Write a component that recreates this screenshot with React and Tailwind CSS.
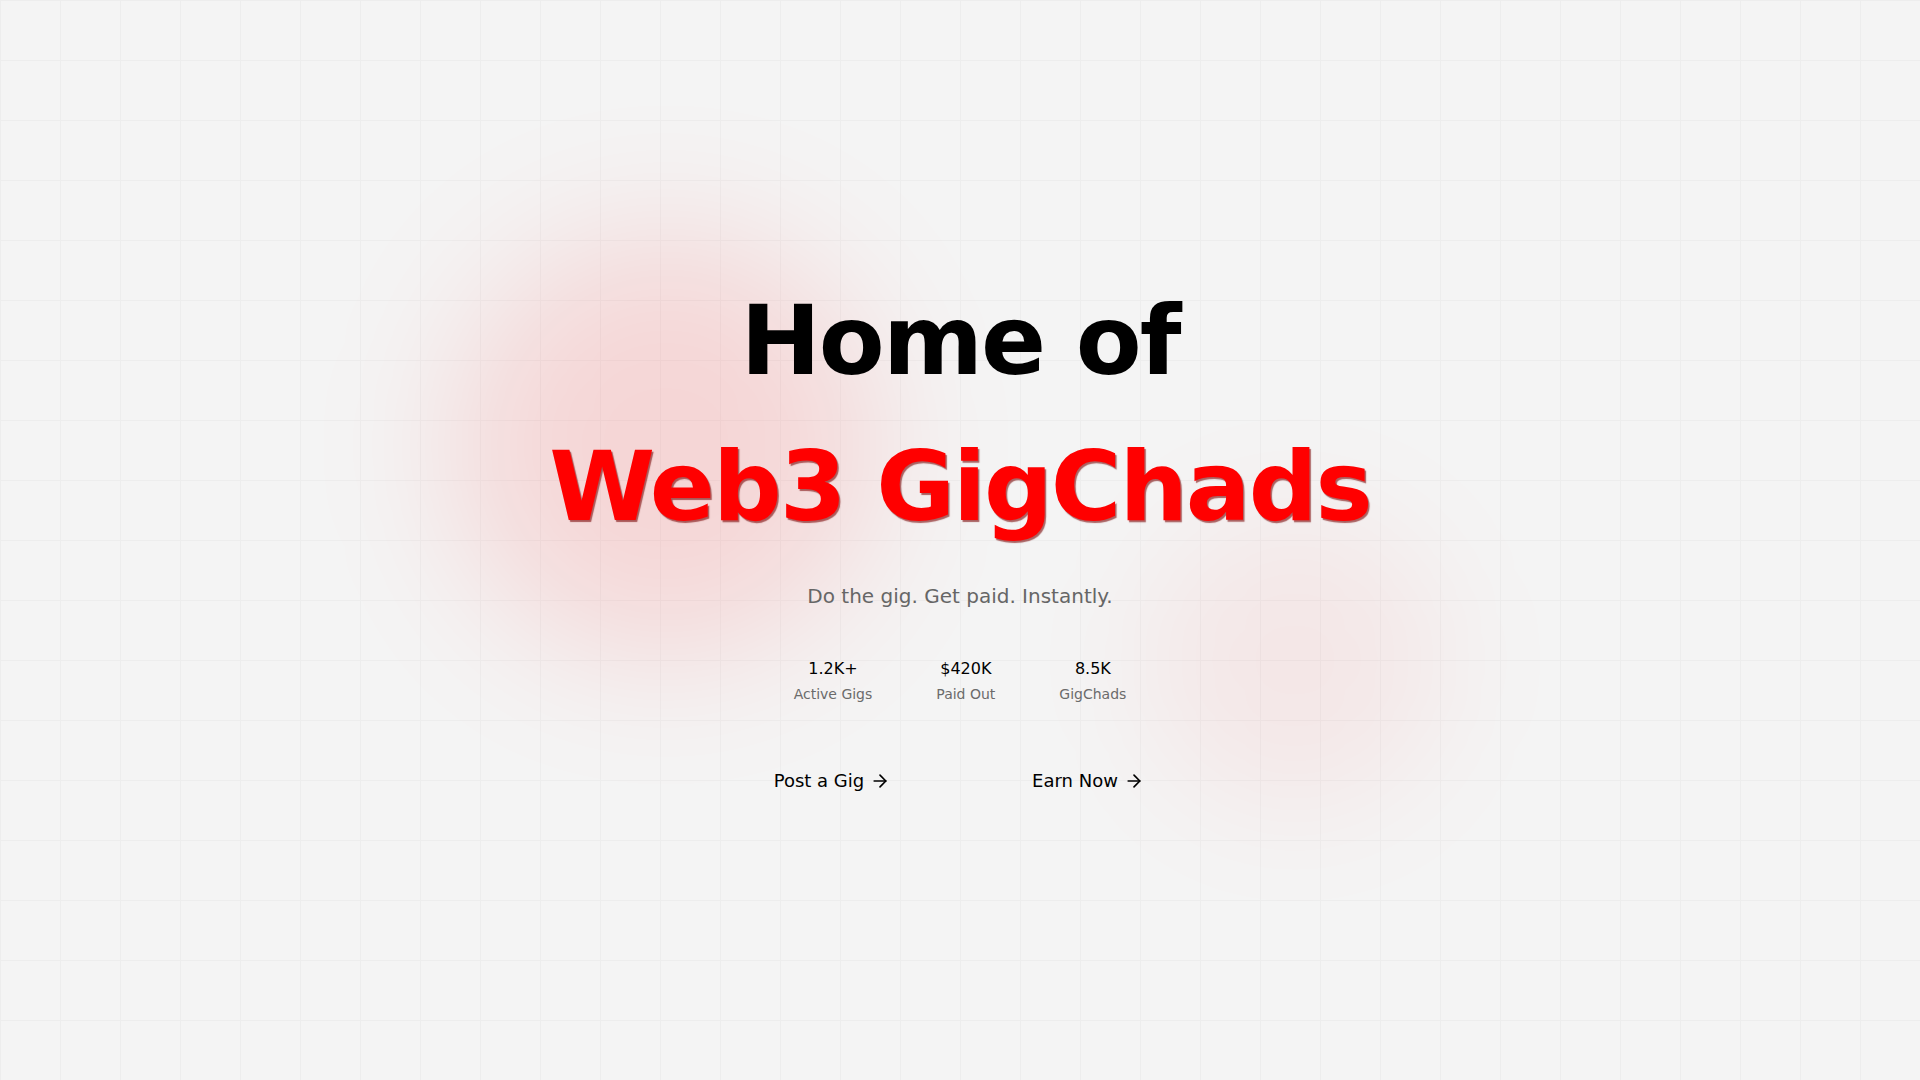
import { ArrowRight } from "lucide-react";

const stats = [
  { value: "1.2K+", label: "Active Gigs" },
  { value: "$420K", label: "Paid Out" },
  { value: "8.5K", label: "GigChads" },
];

export default function App() {
  return (
    <div className="relative min-h-screen w-full overflow-hidden bg-[#f4f4f4] font-['DejaVu_Sans',sans-serif]">
      {/* grid */}
      <div className="pointer-events-none absolute inset-0 bg-[linear-gradient(to_right,#ededed_1px,transparent_1px),linear-gradient(to_bottom,#ededed_1px,transparent_1px)] bg-[size:60px_60px]" />

      {/* glow blobs */}
      <div className="pointer-events-none absolute left-[456px] top-[235px] h-[420px] w-[420px] rounded-full bg-[rgba(255,0,0,0.12)] blur-[70px]" />
      <div className="pointer-events-none absolute left-[1145px] top-[510px] h-[300px] w-[300px] rounded-full bg-[rgba(255,0,0,0.05)] blur-[60px]" />

      <main className="relative flex flex-col items-center pt-[293px] text-center">
        <h1 className="text-8xl font-bold leading-none tracking-[-0.02em] text-black">
          <span className="block">Home of</span>
          <span className="mt-[50px] block text-[#ff0000] [text-shadow:1.5px_1.5px_1px_rgba(120,0,0,0.6)]">
            Web3 GigChads
          </span>
        </h1>

        <p className="mt-[47px] text-xl text-[#666666]">Do the gig. Get paid. Instantly.</p>

        <div className="mt-[47px] flex gap-16">
          {stats.map((s) => (
            <div key={s.label} className="flex flex-col items-center">
              <span className="text-base text-black">{s.value}</span>
              <span className="mt-[3px] text-sm text-[#6b6b6b]">{s.label}</span>
            </div>
          ))}
        </div>

        <div className="mt-[51px] flex gap-12">
          <button className="flex w-52 items-center justify-center gap-1.5 py-3 text-lg text-black">
            Post a Gig
            <ArrowRight size={20} strokeWidth={2} />
          </button>
          <button className="flex w-52 items-center justify-center gap-1.5 py-3 text-lg text-black">
            Earn Now
            <ArrowRight size={20} strokeWidth={2} />
          </button>
        </div>
      </main>
    </div>
  );
}
